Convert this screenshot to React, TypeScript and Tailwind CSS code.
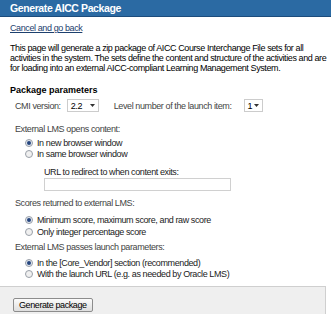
import { useState } from "react";

const font = { fontFamily: '"Liberation Sans", Arial, sans-serif' };

function Radio({ checked, label, onChange }: { checked: boolean; label: string; onChange: () => void }) {
  return (
    <label className="flex items-center gap-[4px] h-[11px] cursor-pointer" onClick={onChange}>
      <span
        className={`w-[8px] h-[8px] rounded-full border border-[#9aa0a8] flex items-center justify-center ${checked ? "bg-[#e2e8f2]" : "bg-[#f0f0f0]"}`}
      >
        {checked && <span className="w-[4px] h-[4px] rounded-full bg-[#25457e]" />}
      </span>
      <span className="text-[#222]">{label}</span>
    </label>
  );
}

function FakeSelect({ value, width }: { value: string; width: string }) {
  return (
    <span className={`inline-flex items-center justify-between h-[13px] border border-[#cccccc] bg-white pl-[3px] pr-[3px] ${width}`}>
      <span className="text-black">{value}</span>
      <svg width="5" height="3" viewBox="0 0 5 3">
        <path d="M0 0h5L2.5 3z" fill="#333" />
      </svg>
    </span>
  );
}

export default function App() {
  const [opens, setOpens] = useState("new");
  const [scores, setScores] = useState("minmax");
  const [launch, setLaunch] = useState("vendor");

  return (
    <div className="w-[331px] h-[314px] bg-white text-[9px] leading-[10px] tracking-[-0.4px] overflow-hidden flex flex-col" style={font}>
      {/* Title bar */}
      <div className="h-[17px] shrink-0 bg-[#2b6aa3] border-b border-[#1c4c7c] flex items-center px-[10px]">
        <span className="text-white font-bold text-[10.5px] leading-[12px] tracking-[-0.4px]">Generate AICC Package</span>
      </div>

      <div className="flex-1 flex flex-col pl-[10px] pr-[3px]">
        <a href="#" className="mt-[6px] self-start text-[#1d406e] underline">Cancel and go back</a>

        <p className="mt-[10px] text-black">
          This page will generate a zip package of AICC Course Interchange File sets for all activities in the
          system. The sets define the content and structure of the activities and are for loading into an external
          AICC-compliant Learning Management System.
        </p>

        <div className="mt-[12px] font-bold text-black tracking-[0px]">Package parameters</div>

        <div className="pl-[5px] text-[#444]">
          <div className="mt-[4px] flex items-center h-[13px]">
            <span>CMI version:</span>
            <span className="ml-[6px] flex"><FakeSelect value="2.2" width="w-[32px]" /></span>
            <span className="ml-[15px]">Level number of the launch item:</span>
            <span className="ml-[12px] flex"><FakeSelect value="1" width="w-[19px]" /></span>
          </div>

          <div className="mt-[12px]">External LMS opens content:</div>
          <div className="pl-[10px] mt-[3px] flex flex-col">
            <Radio checked={opens === "new"} label="In new browser window" onChange={() => setOpens("new")} />
            <Radio checked={opens === "same"} label="In same browser window" onChange={() => setOpens("same")} />
          </div>

          <div className="pl-[29px] mt-[8px] flex flex-col">
            <span className="text-[#222]">URL to redirect to when content exits:</span>
            <input className="mt-[1px] w-[187px] h-[13px] border border-[#d0d0d0] bg-white outline-none" />
          </div>

          <div className="mt-[7px]">Scores returned to external LMS:</div>
          <div className="pl-[10px] mt-[6px] flex flex-col gap-[1px]">
            <Radio checked={scores === "minmax"} label="Minimum score, maximum score, and raw score" onChange={() => setScores("minmax")} />
            <Radio checked={scores === "int"} label="Only integer percentage score" onChange={() => setScores("int")} />
          </div>

          <div className="mt-[5px]">External LMS passes launch parameters:</div>
          <div className="pl-[10px] mt-[5px] flex flex-col">
            <Radio checked={launch === "vendor"} label="In the [Core_Vendor] section (recommended)" onChange={() => setLaunch("vendor")} />
            <Radio checked={launch === "url"} label="With the launch URL (e.g. as needed by Oracle LMS)" onChange={() => setLaunch("url")} />
          </div>
        </div>
      </div>

      {/* Footer */}
      <div className="h-[28px] shrink-0 mr-[5px] bg-[#efefef] border-t border-r border-[#cfcfcf] flex items-start pt-[11px] pl-[13px]">
        <button className="h-[14px] px-[5px] border border-[#8c8c8c] rounded-[2px] bg-gradient-to-b from-[#fbfbfb] to-[#dedede] text-black text-[9px] leading-[10px] tracking-[-0.4px]">
          Generate package
        </button>
      </div>
    </div>
  );
}
